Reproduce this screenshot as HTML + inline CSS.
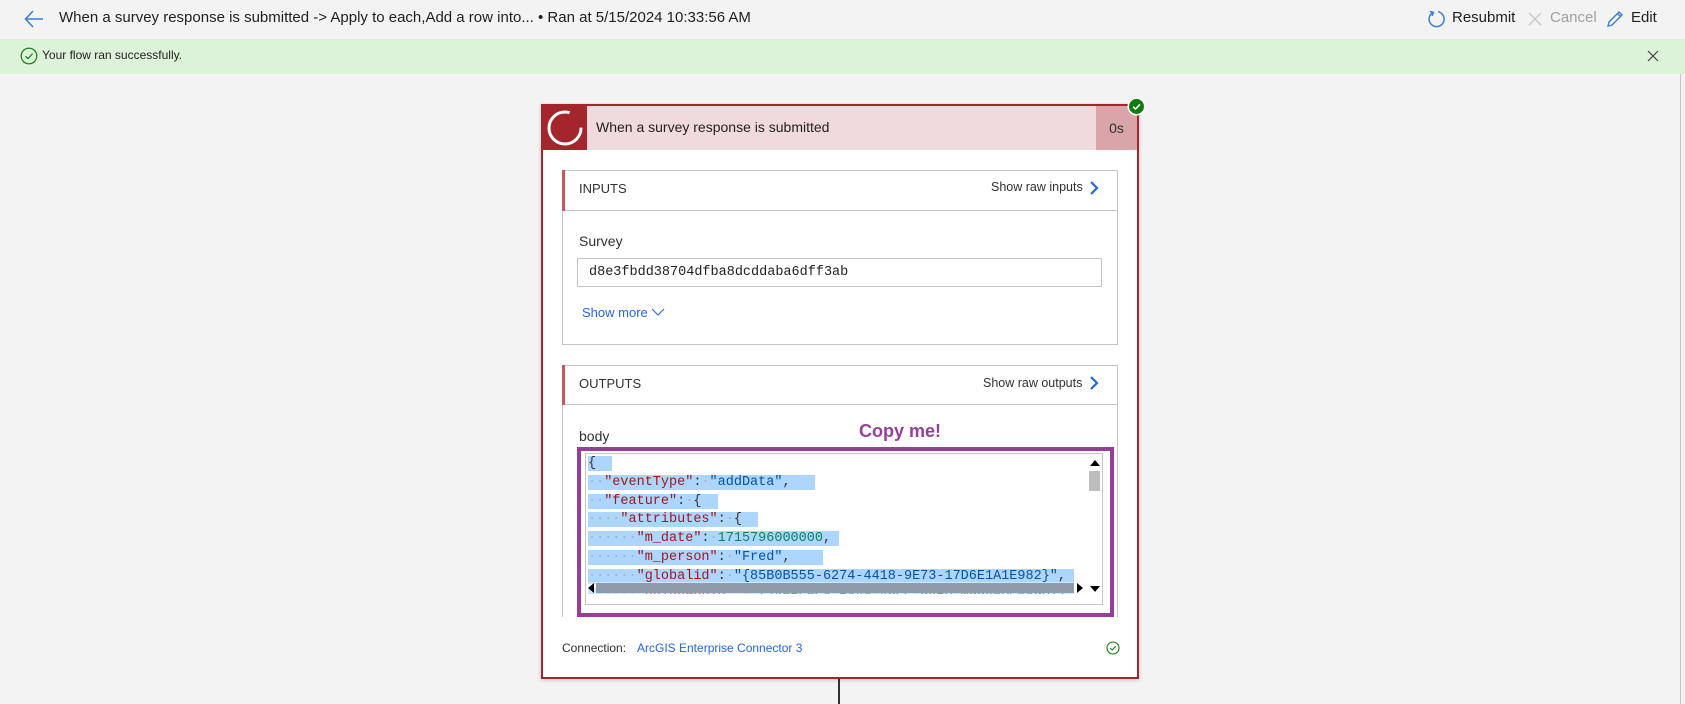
<!DOCTYPE html>
<html><head><meta charset="utf-8"><style>
*{box-sizing:border-box;margin:0;padding:0}
body{width:1685px;height:704px;overflow:hidden;background:#f3f3f3;font-family:"Segoe UI","Liberation Sans",sans-serif;position:relative;color:#323130}
.abs{position:absolute}
.mono{font-family:"Liberation Mono","DejaVu Sans Mono",monospace}
.code div{height:18.8px;line-height:18.8px;white-space:pre;font-size:13.5px}
.code span.s{background:#add6ff}
.k{color:#a31515}.v{color:#0451a5}.n{color:#098658}.d{color:#b0b0b0}
</style></head><body>
<!-- top bar -->
<svg class="abs" style="left:24px;top:10px" width="20" height="18" viewBox="0 0 20 18"><path d="M19 9H2M9 1L1.5 9L9 17" stroke="#3b7ddd" stroke-width="1.6" fill="none"/></svg>
<div class="abs" style="left:59px;top:9px;font-size:15px;color:#201f1e">When a survey response is submitted -&gt; Apply to each,Add a row into... • Ran at 5/15/2024 10:33:56 AM</div>
<svg class="abs" style="left:1428px;top:10px" width="18" height="18" viewBox="0 0 18 18"><path d="M5 2.5A7.5 7.5 0 1 0 10 1.7" stroke="#3b7ddd" stroke-width="1.5" fill="none"/><path d="M2 1.5L5.5 2.5L4 6" stroke="#3b7ddd" stroke-width="1.5" fill="none"/></svg>
<div class="abs" style="left:1452px;top:9px;font-size:15px;color:#201f1e">Resubmit</div>
<svg class="abs" style="left:1528px;top:12px" width="14" height="14"><path d="M1 1L13 13M13 1L1 13" stroke="#c8c6c4" stroke-width="1.3"/></svg>
<div class="abs" style="left:1550px;top:9px;font-size:15px;color:#a19f9d">Cancel</div>
<svg class="abs" style="left:1606px;top:10px" width="18" height="18" viewBox="0 0 18 18"><path d="M2 16L3 12L13 2L16 5L6 15Z M11.5 3.5L14.5 6.5" stroke="#3b7ddd" stroke-width="1.4" fill="none"/></svg>
<div class="abs" style="left:1631px;top:9px;font-size:15px;color:#201f1e">Edit</div>
<!-- banner -->
<div class="abs" style="left:0;top:39px;width:1685px;height:35px;background:#dcf3d9"></div>
<svg class="abs" style="left:20px;top:47px" width="18" height="18" viewBox="0 0 18 18"><circle cx="9" cy="9" r="7.8" stroke="#107c10" stroke-width="1.2" fill="none"/><path d="M5.5 9.3L8 11.6L12.6 6.6" stroke="#107c10" stroke-width="1.2" fill="none"/></svg>
<div class="abs" style="left:42px;top:48px;font-size:12px;color:#201f1e">Your flow ran successfully.</div>
<svg class="abs" style="left:1647px;top:50px" width="12" height="12"><path d="M1 1L11 11M11 1L1 11" stroke="#444" stroke-width="1.2"/></svg>
<div class="abs" style="left:1680px;top:74px;width:1px;height:630px;background:#c8c6c4"></div>
<div class="abs" style="left:838px;top:678px;width:2px;height:26px;background:#323130"></div>
<!-- card -->
<div class="abs" style="left:541px;top:104px;width:598px;height:575px;background:#fff;border:2px solid #a4262c;box-shadow:0 1px 4px rgba(0,0,0,.2)"></div>
<div class="abs" style="left:543px;top:106px;width:594px;height:44px;background:#f0dadd"></div>
<div class="abs" style="left:543px;top:106px;width:44px;height:44px;background:#a4262c"></div>
<svg class="abs" style="left:545px;top:106px" width="42" height="44" viewBox="0 0 42 44"><circle cx="20" cy="22" r="16" fill="none" stroke="#fff" stroke-width="3" stroke-dasharray="80 20"/><circle cx="21" cy="22" r="13.5" fill="#a4262c"/></svg>
<div class="abs" style="left:596px;top:119px;font-size:14px;color:#201f1e">When a survey response is submitted</div>
<div class="abs" style="left:1096px;top:106px;width:41px;height:44px;background:#d9a5a9;font-size:14px;line-height:44px;text-align:center">0s</div>
<svg class="abs" style="left:1127px;top:97px" width="19" height="19"><circle cx="9.5" cy="9.5" r="9" fill="#fff"/><circle cx="9.5" cy="9.5" r="7.5" fill="#107c10"/><path d="M6 9.8L8.5 12L13 7.3" stroke="#fff" stroke-width="1.5" fill="none"/></svg>
<!-- inputs -->
<div class="abs" style="left:562px;top:170px;width:556px;height:175px;border:1px solid #c8c6c4"></div>
<div class="abs" style="left:562px;top:210px;width:556px;height:1px;background:#c8c6c4"></div>
<div class="abs" style="left:562px;top:170px;width:3px;height:41px;background:#c4585e"></div>
<div class="abs" style="left:579px;top:181px;font-size:13px">INPUTS</div>
<div class="abs" style="left:991px;top:180px;font-size:12.5px">Show raw inputs</div>
<svg class="abs" style="left:1088px;top:180px" width="12" height="16"><path d="M3 2L9 8L3 14" stroke="#2266e3" stroke-width="2.2" fill="none"/></svg>
<div class="abs" style="left:579px;top:233px;font-size:14px">Survey</div>
<div class="abs mono" style="left:577px;top:258px;width:525px;height:29px;border:1px solid #c8c6c4;padding-left:11px;line-height:27px;font-size:13.5px;color:#201f1e">d8e3fbdd38704dfba8dcddaba6dff3ab</div>
<div class="abs" style="left:582px;top:305px;font-size:13px;color:#2266e3">Show more</div>
<svg class="abs" style="left:651px;top:307px" width="14" height="10"><path d="M1 2L7 8L13 2" stroke="#2266e3" stroke-width="1.1" fill="none"/></svg>
<!-- outputs -->
<div class="abs" style="left:562px;top:365px;width:556px;height:252px;border:1px solid #c8c6c4;border-bottom:none"></div>
<div class="abs" style="left:562px;top:404px;width:556px;height:1px;background:#c8c6c4"></div>
<div class="abs" style="left:562px;top:365px;width:3px;height:40px;background:#c4585e"></div>
<div class="abs" style="left:579px;top:376px;font-size:13px">OUTPUTS</div>
<div class="abs" style="left:983px;top:376px;font-size:12.5px">Show raw outputs</div>
<svg class="abs" style="left:1088px;top:375px" width="12" height="16"><path d="M3 2L9 8L3 14" stroke="#2266e3" stroke-width="2.2" fill="none"/></svg>
<div class="abs" style="left:579px;top:428px;font-size:14px">body</div>
<div class="abs" style="left:859px;top:421px;font-size:18px;font-weight:bold;color:#973f98">Copy me!</div>
<div class="abs" style="left:577px;top:447px;width:537px;height:170px;border:4px solid #973f98;background:#fff"></div>
<div class="abs" style="left:585px;top:453px;width:518px;height:152px;border:1px solid #c8c6c4;overflow:hidden">
<div class="mono code" style="position:absolute;left:2px;top:1px">
<div><span class="s">{&nbsp;&nbsp;</span></div>
<div><span class="s"><span class="d">··</span><span class="k">"eventType"</span>:<span class="d">·</span><span class="v">"addData"</span>,&nbsp;&nbsp;&nbsp;</span></div>
<div><span class="s"><span class="d">··</span><span class="k">"feature"</span>:<span class="d">·</span>{&nbsp;&nbsp;</span></div>
<div><span class="s"><span class="d">····</span><span class="k">"attributes"</span>:<span class="d">·</span>{&nbsp;&nbsp;</span></div>
<div><span class="s"><span class="d">······</span><span class="k">"m_date"</span>:<span class="d">·</span><span class="n">1715796000000</span>,&nbsp;</span></div>
<div><span class="s"><span class="d">······</span><span class="k">"m_person"</span>:<span class="d">·</span><span class="v">"Fred"</span>,&nbsp;&nbsp;&nbsp;&nbsp;</span></div>
<div><span class="s"><span class="d">······</span><span class="k">"globalid"</span>:<span class="d">·</span><span class="v">"{85B0B555-6274-4418-9E73-17D6E1A1E982}"</span>,&nbsp;</span></div>
<div><span class="s"><span class="d">······</span><span class="k">"uniqueguid"</span>:<span class="d">·</span><span class="v">"{24BECBC8-E8A8-46CC-9AED-099ABDCB89D7}"</span></span></div>
</div>
<div style="position:absolute;right:0;top:0;width:15px;height:135px;background:#fff"></div>
<div style="position:absolute;right:2px;top:6px;width:0;height:0;border-left:5px solid transparent;border-right:5px solid transparent;border-bottom:6px solid #000"></div>
<div style="position:absolute;right:2px;top:17px;width:11px;height:20px;background:#bdbdbd"></div>
<div style="position:absolute;left:0;top:128px;width:500px;height:12px;background:#fff;opacity:.4"></div>
<div style="position:absolute;left:10px;top:129px;width:478px;height:10px;background:#8d9bab"></div>
<div style="position:absolute;left:2px;top:129px;width:0;height:0;border-top:5px solid transparent;border-bottom:5px solid transparent;border-right:6px solid #000"></div>
<div style="position:absolute;left:491px;top:129px;width:0;height:0;border-top:5px solid transparent;border-bottom:5px solid transparent;border-left:6px solid #000"></div>
<div style="position:absolute;right:2px;top:132px;width:0;height:0;border-left:5px solid transparent;border-right:5px solid transparent;border-top:6px solid #000"></div>
<div style="position:absolute;left:0;top:140px;width:518px;height:12px;background:#fff"></div>
</div>
<!-- connection -->
<div class="abs" style="left:562px;top:641px;font-size:12px">Connection:</div>
<div class="abs" style="left:637px;top:641px;font-size:12px;color:#2266e3">ArcGIS Enterprise Connector 3</div>
<svg class="abs" style="left:1106px;top:641px" width="14" height="14"><circle cx="7" cy="7" r="6" stroke="#107c10" stroke-width="1.1" fill="none"/><path d="M4.2 7.2L6.2 9L9.8 5.2" stroke="#107c10" stroke-width="1.1" fill="none"/></svg>
</body></html>
